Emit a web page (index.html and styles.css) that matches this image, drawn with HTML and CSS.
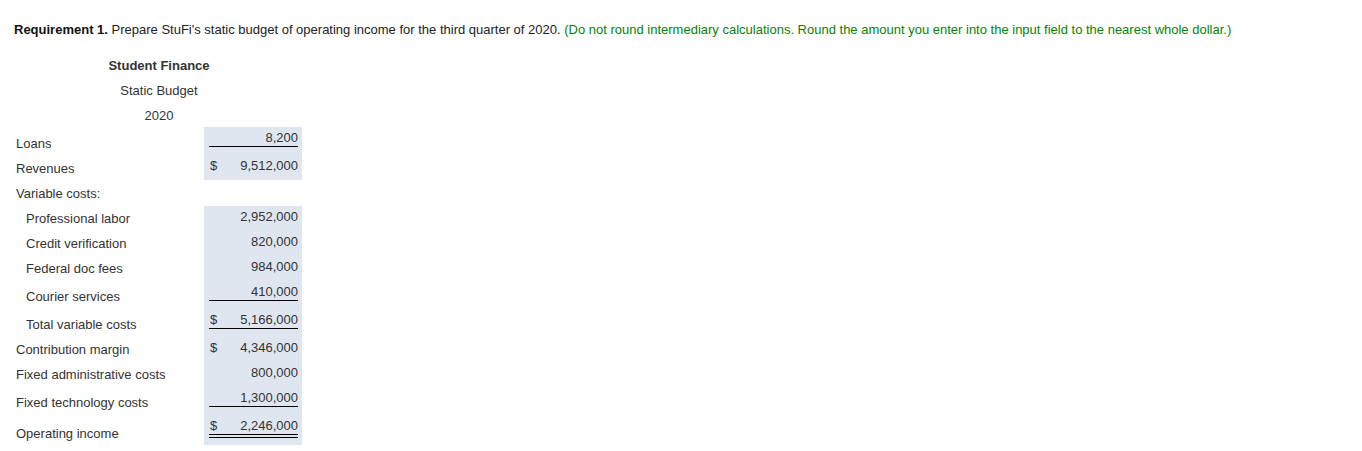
FILE: index.html
```html
<!DOCTYPE html>
<html lang="en">
<head>
<meta charset="utf-8">
<title>Static Budget</title>
<link rel="stylesheet" href="styles.css">
</head>
<body>
<p class="req"><b>Requirement 1.</b> Prepare StuFi's static budget of operating income for the third quarter of 2020. <span class="hint">(Do not round intermediary calculations. Round the amount you enter into the input field to the nearest whole dollar.)</span></p>
<div class="sheet">
  <div class="head bold">Student Finance</div>
  <div class="head">Static Budget</div>
  <div class="head">2020</div>

  <div class="row h28 lo"><div class="lbl">Loans</div><div class="val"><div class="in u"><span></span><span>8,200</span></div></div></div>
  <div class="row lo"><div class="lbl">Revenues</div><div class="val"><div class="in"><span>$</span><span>9,512,000</span></div></div></div>
  <div class="row h26"><div class="lbl">Variable costs:</div><div class="val none"></div></div>
  <div class="row"><div class="lbl ind">Professional labor</div><div class="val"><div class="in"><span></span><span>2,952,000</span></div></div></div>
  <div class="row"><div class="lbl ind">Credit verification</div><div class="val"><div class="in"><span></span><span>820,000</span></div></div></div>
  <div class="row"><div class="lbl ind">Federal doc fees</div><div class="val"><div class="in"><span></span><span>984,000</span></div></div></div>
  <div class="row h28"><div class="lbl ind">Courier services</div><div class="val"><div class="in u"><span></span><span>410,000</span></div></div></div>
  <div class="row h28"><div class="lbl ind">Total variable costs</div><div class="val"><div class="in u"><span>$</span><span>5,166,000</span></div></div></div>
  <div class="row"><div class="lbl">Contribution margin</div><div class="val"><div class="in"><span>$</span><span>4,346,000</span></div></div></div>
  <div class="row"><div class="lbl">Fixed administrative costs</div><div class="val"><div class="in"><span></span><span>800,000</span></div></div></div>
  <div class="row h28"><div class="lbl">Fixed technology costs</div><div class="val"><div class="in u"><span></span><span>1,300,000</span></div></div></div>
  <div class="row h30 lo"><div class="lbl">Operating income</div><div class="val"><div class="in dbl"><span>$</span><span>2,246,000</span></div></div></div>
</div>
</body>
</html>
```
FILE: styles.css
```css
body {
  margin: 8px;
  font-family: "Liberation Sans", Arial, sans-serif;
  font-size: 13px;
  color: #333;
  background: #fff;
}
.req {
  margin: 14px 0 0 6px;
  line-height: 16px;
  color: #222;
}
.req b { color: #111; }
.hint { color: #0b7f0b; }
.sheet {
  margin: 15px 0 0 8px;
  width: 286px;
}
.head {
  text-align: center;
  height: 25px;
  line-height: 25px;
}
.head.bold { font-weight: bold; }
.head + .row { margin-top: -1px; }
.row {
  display: flex;
  height: 25px;
}
.row.h26 { height: 26px; }
.row.h28 { height: 28px; }
.row.h30 { height: 30px; }
.lbl {
  width: 188px;
  align-self: flex-end;
  line-height: 16px;
  padding-bottom: 4px;
  white-space: nowrap;
}
.row.lo .lbl { padding-bottom: 3px; }
.lbl.ind { padding-left: 10px; box-sizing: border-box; }
.val {
  width: 98px;
  box-sizing: border-box;
  background: #dfe6f0;
  padding: 3px 4px 0 5px;
}
.val.none { background: transparent; }
.in {
  display: flex;
  justify-content: space-between;
  line-height: 16px;
  padding-left: 1px;
}
.in.u { border-bottom: 1px solid #000; }
.in.dbl { border-bottom: 4px double #000; }
```
